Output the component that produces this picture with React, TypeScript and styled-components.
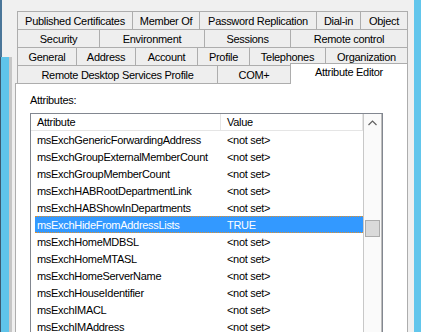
import React from 'react';
import styled, { createGlobalStyle } from 'styled-components';

interface TabDef {
    label: string;
    width: number;
    selected?: boolean;
}

interface AttributeRow {
    name: string;
    value: string;
    selected?: boolean;
}

const tabRows: TabDef[][] = [
    [
        { label: 'Published Certificates', width: 115 },
        { label: 'Member Of', width: 67 },
        { label: 'Password Replication', width: 117 },
        { label: 'Dial-in', width: 44 },
        { label: 'Object', width: 48 },
    ],
    [
        { label: 'Security', width: 82 },
        { label: 'Environment', width: 105 },
        { label: 'Sessions', width: 86 },
        { label: 'Remote control', width: 118 },
    ],
    [
        { label: 'General', width: 59 },
        { label: 'Address', width: 59 },
        { label: 'Account', width: 62 },
        { label: 'Profile', width: 52 },
        { label: 'Telephones', width: 76 },
        { label: 'Organization', width: 83 },
    ],
    [
        { label: 'Remote Desktop Services Profile', width: 200 },
        { label: 'COM+', width: 73 },
        { label: 'Attribute Editor', width: 118, selected: true },
    ],
];

const attributes: AttributeRow[] = [
    { name: 'msExchGenericForwardingAddress', value: '<not set>' },
    { name: 'msExchGroupExternalMemberCount', value: '<not set>' },
    { name: 'msExchGroupMemberCount', value: '<not set>' },
    { name: 'msExchHABRootDepartmentLink', value: '<not set>' },
    { name: 'msExchHABShowInDepartments', value: '<not set>' },
    { name: 'msExchHideFromAddressLists', value: 'TRUE', selected: true },
    { name: 'msExchHomeMDBSL', value: '<not set>' },
    { name: 'msExchHomeMTASL', value: '<not set>' },
    { name: 'msExchHomeServerName', value: '<not set>' },
    { name: 'msExchHouseIdentifier', value: '<not set>' },
    { name: 'msExchIMACL', value: '<not set>' },
    { name: 'msExchIMAddress', value: '<not set>' },
];

function App() {
    return (
        <>
            <GlobalStyle />
            <Screen>
                <LeftEdge>
                    <EdgeTop />
                    <EdgeBottom />
                </LeftEdge>
                <Dialog>
                    {tabRows.map((row, i) => (
                        <TabRow key={i}>
                            {row.map(tab => (
                                <Tab key={tab.label} $width={tab.width} $selected={tab.selected}>
                                    {tab.label}
                                </Tab>
                            ))}
                        </TabRow>
                    ))}
                    <Panel>
                        <Label>Attributes:</Label>
                        <ListBox>
                            <Columns>
                                <Header>
                                    <HeaderCell $width={190}>Attribute</HeaderCell>
                                    <HeaderCell>Value</HeaderCell>
                                </Header>
                                <Rows>
                                    {attributes.map(a => (
                                        <Row key={a.name} $selected={a.selected}>
                                            <NameCell>{a.name}</NameCell>
                                            <ValueCell>{a.value}</ValueCell>
                                        </Row>
                                    ))}
                                </Rows>
                            </Columns>
                            <ScrollBar>
                                <ArrowButton>
                                    <svg width="9" height="6" viewBox="0 0 9 6">
                                        <path d="M0.5 5 L4.5 1 L8.5 5" fill="none" stroke="#606060" strokeWidth="1.2" />
                                    </svg>
                                </ArrowButton>
                                <Track>
                                    <Thumb />
                                </Track>
                            </ScrollBar>
                        </ListBox>
                    </Panel>
                </Dialog>
                <RightEdge />
            </Screen>
        </>
    );
}

const GlobalStyle = createGlobalStyle`
    html, body {
        margin: 0;
        padding: 0;
    }

    body {
        font-family: "Liberation Sans", Arial, sans-serif;
        font-size: 11px;
        letter-spacing: -0.3px;
        color: #000;
    }
`;

const Screen = styled.div`
    width: 421px;
    height: 332px;
    overflow: hidden;

    display: flex;

    background: #f0f0f0;
`;

const LeftEdge = styled.div`
    width: 12px;
    flex-shrink: 0;

    display: flex;
    flex-direction: column;
`;

const EdgeTop = styled.div`
    height: 57px;
    border-left: 2px solid #4a7699;
`;

const EdgeBottom = styled.div`
    flex: 1;

    background: #5fc4ea;
    border-left: 1px solid #3d5a70;
    border-right: 3px solid #c6c6c6;
`;

const RightEdge = styled.div`
    width: 7px;
    flex-shrink: 0;

    background: #62c6ec;
`;

const Dialog = styled.div`
    flex: 1;
    padding: 11px 6px 0 3px;

    display: flex;
    flex-direction: column;
`;

const TabRow = styled.div`
    height: 18px;
    margin-left: 2px;
    flex-shrink: 0;

    display: flex;

    position: relative;
    z-index: 1;
`;

const Tab = styled.div<{ $width: number; $selected?: boolean }>`
    flex: 0 0 ${props => props.$width}px;
    height: ${props => (props.$selected ? '21px' : '18px')};
    margin-top: ${props => (props.$selected ? '-2px' : '0')};
    box-sizing: border-box;

    display: flex;
    justify-content: center;
    align-items: ${props => (props.$selected ? 'flex-start' : 'center')};
    padding-top: ${props => (props.$selected ? '2px' : '0')};

    background: ${props => (props.$selected ? '#fff' : '#eeeeee')};
    border-top: 1px solid #adadad;
    border-left: 1px solid #adadad;
    white-space: nowrap;

    &:last-child {
        border-right: 1px solid #adadad;
    }
`;

const Panel = styled.div`
    flex: 1;
    padding: 10px 0 0 14px;

    background: #fff;
    border: 1px solid #adadad;
    border-bottom: none;
`;

const Label = styled.div`
    height: 13px;
    line-height: 13px;
    margin-bottom: 6px;
`;

const ListBox = styled.div`
    width: 353px;
    height: 240px;
    box-sizing: border-box;

    display: flex;

    border: 1px solid #828790;
`;

const Columns = styled.div`
    flex: 1;

    display: flex;
    flex-direction: column;
`;

const Header = styled.div`
    height: 16px;

    display: flex;

    border-bottom: 1px solid #e5e5e5;
`;

const HeaderCell = styled.div<{ $width?: number }>`
    ${props => (props.$width ? `flex: 0 0 ${props.$width}px;` : 'flex: 1;')}
    box-sizing: border-box;
    padding-left: 6px;

    line-height: 17px;

    border-right: 1px solid #e5e5e5;
`;

const Rows = styled.div`
    margin-left: 4px;

    display: flex;
    flex-direction: column;
`;

const Row = styled.div<{ $selected?: boolean }>`
    height: 17px;
    box-sizing: border-box;

    display: flex;
    align-items: center;

    background: ${props => (props.$selected ? '#3399ff' : 'transparent')};
    color: ${props => (props.$selected ? '#fff' : '#000')};
    border-top: 1px ${props => (props.$selected ? 'dotted #e0902c' : 'solid transparent')};
    border-bottom: 1px ${props => (props.$selected ? 'dotted #e0902c' : 'solid transparent')};
`;

const NameCell = styled.div`
    flex: 0 0 186px;
    padding-left: 2px;
    box-sizing: border-box;
    white-space: nowrap;
`;

const ValueCell = styled.div`
    flex: 1;
    padding-left: 6px;
    white-space: nowrap;
`;

const ScrollBar = styled.div`
    width: 17px;
    flex-shrink: 0;

    display: flex;
    flex-direction: column;

    background: #fafafa;
    border-left: 1px solid #c8c8c8;
    border-right: 1px solid #bdbdbd;
`;

const ArrowButton = styled.div`
    height: 17px;

    display: flex;
    justify-content: center;
    align-items: center;
`;

const Track = styled.div`
    flex: 1;
    padding: 89px 1px 0;
`;

const Thumb = styled.div`
    height: 17px;
    box-sizing: border-box;

    background: #dadada;
    border: 1px solid #acacac;
`;

export default App;
